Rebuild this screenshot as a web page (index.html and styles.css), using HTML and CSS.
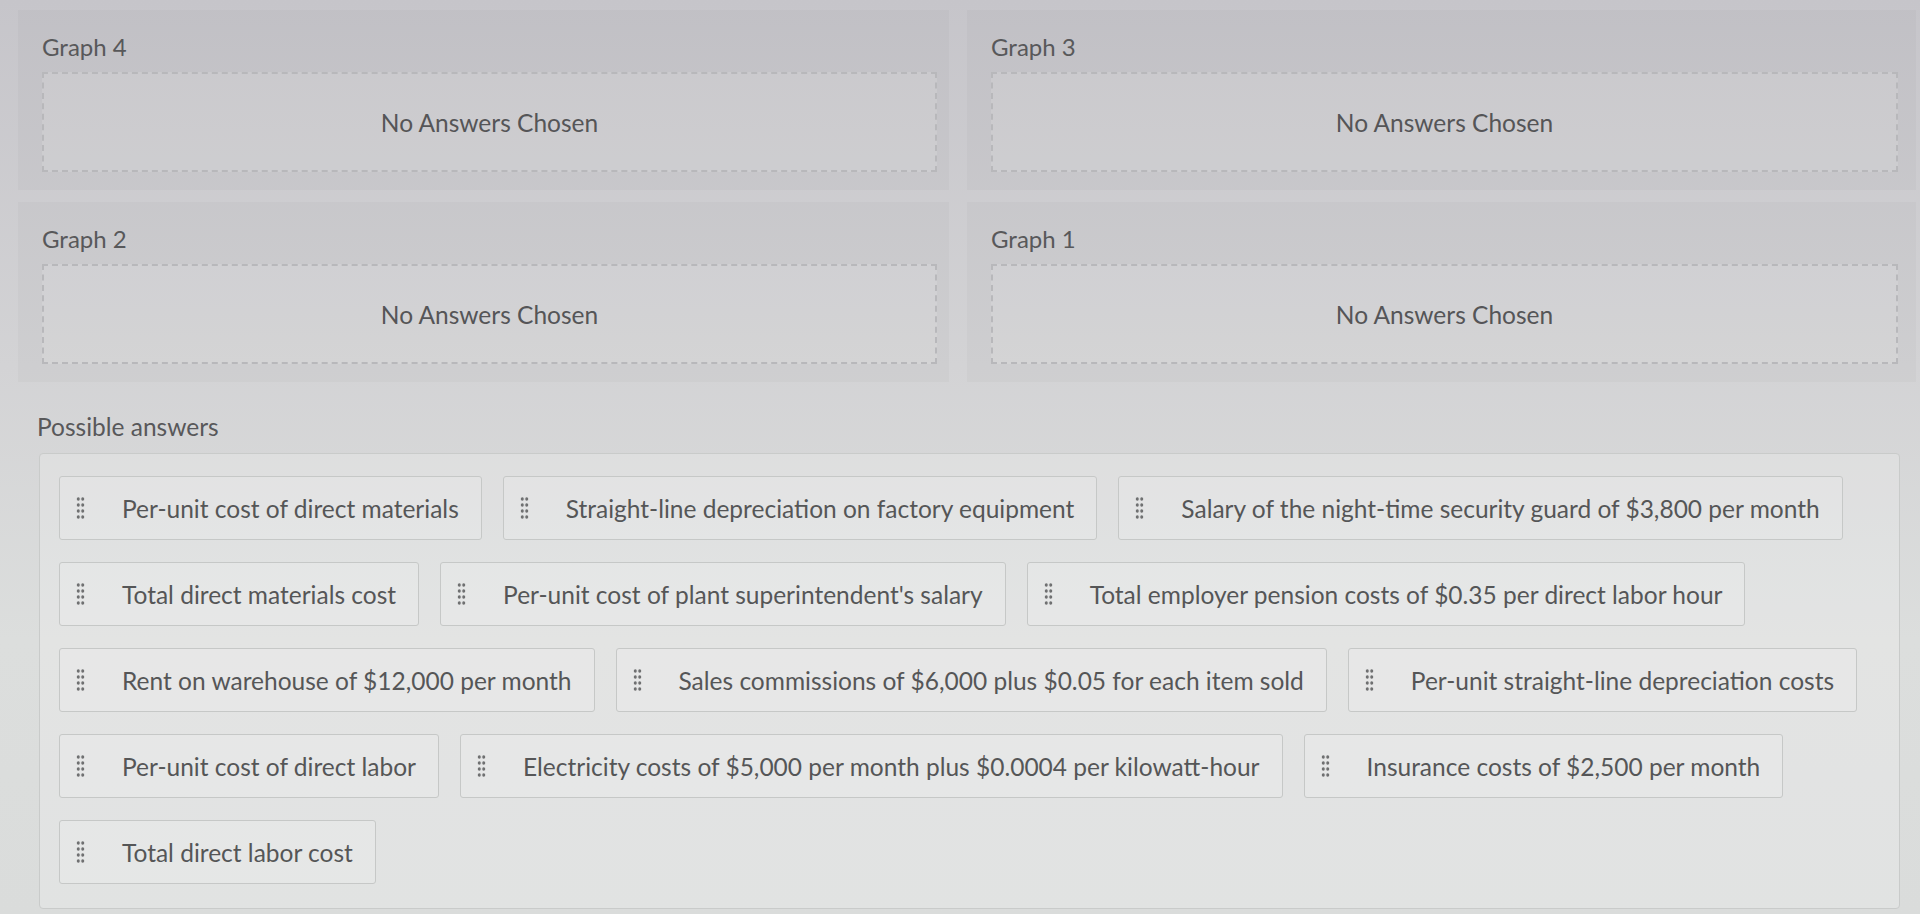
FILE: index.html
```html
<!DOCTYPE html>
<html lang="en">
<head>
    <meta charset="UTF-8">
    <title>Classify costs</title>
    <link rel="stylesheet" href="styles.css">
</head>
<body>
    <div class="graphs">
        <div class="graph">
            <div class="graph-label">Graph 4</div>
            <div class="drop-zone">No Answers Chosen</div>
        </div>
        <div class="graph">
            <div class="graph-label">Graph 3</div>
            <div class="drop-zone">No Answers Chosen</div>
        </div>
        <div class="graph">
            <div class="graph-label">Graph 2</div>
            <div class="drop-zone">No Answers Chosen</div>
        </div>
        <div class="graph">
            <div class="graph-label">Graph 1</div>
            <div class="drop-zone">No Answers Chosen</div>
        </div>
    </div>

    <div class="answers">
        <div class="answers-label">Possible answers</div>
        <div class="answers-pool">
            <div class="chip"><span class="handle"></span>Per-unit cost of direct materials</div>
            <div class="chip"><span class="handle"></span>Straight-line depreciation on factory equipment</div>
            <div class="chip"><span class="handle"></span>Salary of the night-time security guard of $3,800 per month</div>
            <div class="chip"><span class="handle"></span>Total direct materials cost</div>
            <div class="chip"><span class="handle"></span>Per-unit cost of plant superintendent's salary</div>
            <div class="chip"><span class="handle"></span>Total employer pension costs of $0.35 per direct labor hour</div>
            <div class="chip"><span class="handle"></span>Rent on warehouse of $12,000 per month</div>
            <div class="chip"><span class="handle"></span>Sales commissions of $6,000 plus $0.05 for each item sold</div>
            <div class="chip"><span class="handle"></span>Per-unit straight-line depreciation costs</div>
            <div class="chip"><span class="handle"></span>Per-unit cost of direct labor</div>
            <div class="chip"><span class="handle"></span>Electricity costs of $5,000 per month plus $0.0004 per kilowatt-hour</div>
            <div class="chip"><span class="handle"></span>Insurance costs of $2,500 per month</div>
            <div class="chip"><span class="handle"></span>Total direct labor cost</div>
        </div>
    </div>
</body>
</html>
```

FILE: styles.css
```css
html, body {
    margin: 0;
    padding: 0;
    height: 100%;
    overflow: hidden;
}

body {
    background: linear-gradient(to bottom, #c6c5ca 0%, #d3d3d5 40%, #dcdedd 70%, #dadcdb 100%);
    font-family: Lato, "Open Sans", sans-serif;
    color: #555;
}

.graphs {
    display: grid;
    grid-template-columns: 931px 1fr;
    gap: 12px 18px;
    padding: 10px 4px 0 18px;
}

.graph {
    background-color: rgba(0, 0, 0, 0.025);
    padding: 24px 18px 18px 24px;
}

.graph:nth-child(odd) {
    padding-right: 12px;
}

.graph-label {
    font-size: 24px;
    line-height: 26px;
    margin-bottom: 12px;
    color: #58585a;
}

.drop-zone {
    height: 96px;
    border: 2px dashed #b8b8bb;
    background-color: rgba(255, 255, 255, 0.12);
    display: flex;
    align-items: center;
    justify-content: center;
    font-size: 24.5px;
    color: #555557;
}

.answers {
    padding: 32px 20px 0 37px;
}

.answers-label {
    font-size: 24.5px;
    line-height: 26px;
    margin-bottom: 13px;
    color: #58585a;
}

.answers-pool {
    margin-left: 2px;
    background-color: rgba(255, 255, 255, 0.2);
    border: 1px solid #c9cbca;
    border-radius: 4px;
    padding: 22px 20px 24px 19px;
    display: flex;
    flex-wrap: wrap;
    gap: 22px 21px;
}

.chip {
    display: flex;
    align-items: center;
    height: 62px;
    padding: 0 22px 0 16px;
    background-color: rgba(255, 255, 255, 0.14);
    border: 1px solid #c6c8c7;
    border-radius: 3px;
    font-size: 24.5px;
    color: #555657;
    white-space: nowrap;
}

.handle {
    width: 9px;
    height: 24px;
    margin-right: 37px;
    background-image: radial-gradient(circle, #6f7071 1.4px, transparent 1.9px);
    background-size: 4.5px 6px;
    flex-shrink: 0;
}
```
